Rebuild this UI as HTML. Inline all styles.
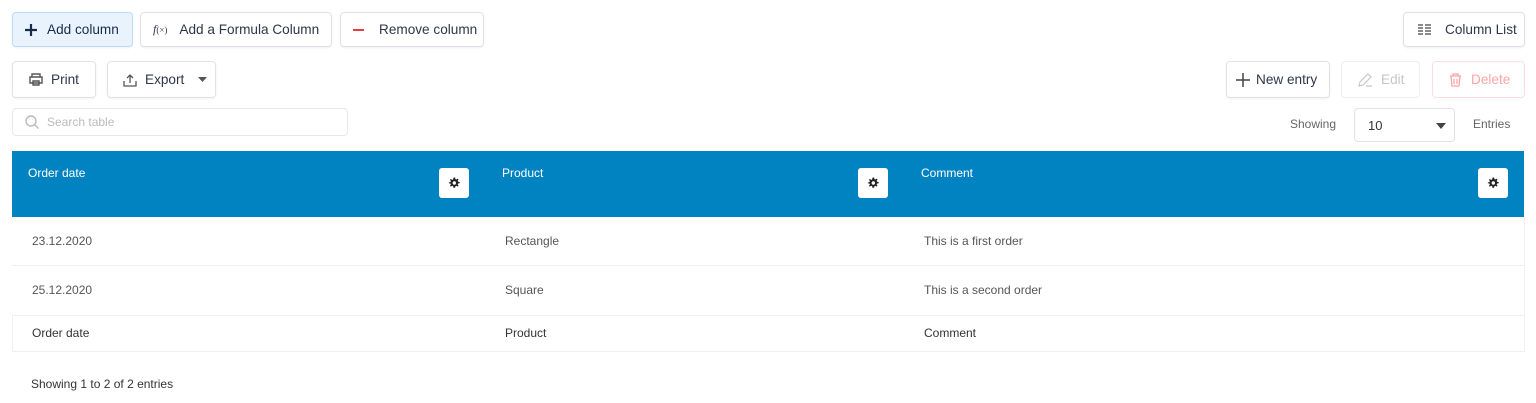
<!DOCTYPE html>
<html><head><style>
*{box-sizing:border-box;margin:0;padding:0}
body{width:1536px;height:403px;background:#fff;font-family:"Liberation Sans",sans-serif;position:relative;overflow:hidden;color:#333}
.b{position:absolute;border:1px solid #dfe2e8;border-radius:4px;background:#fff;display:flex;align-items:center;font-size:13.6px;color:#2d3748;box-shadow:0 1px 2px rgba(0,0,0,.06)}
.t{position:absolute;font-size:12px;color:#555;white-space:nowrap}
.h{position:absolute;font-size:12px;color:#fff}
.g{position:absolute;width:30px;height:30px;background:#fff;border-radius:3px;display:flex;align-items:center;justify-content:center}
.line{position:absolute;left:12px;width:1512px;height:1px;background:#eef0f4}
</style></head><body>
<svg width="0" height="0" style="position:absolute"><defs><g id="cog"><path d="M6 0.5l1.1 0 .3 1.6 1 .45 1.35-.9.8.8-.9 1.35.45 1 1.6.3v1.1l-1.6.3-.45 1 .9 1.35-.8.8-1.35-.9-1 .45-.3 1.6H5.45l-.3-1.6-1-.45-1.35.9-.8-.8.9-1.35-.45-1-1.6-.3V5.45l1.6-.3.45-1-.9-1.35.8-.8 1.35.9 1-.45.3-1.6z" fill="#222"/><circle cx="6.3" cy="6" r="1.7" fill="#fff"/></g></defs></svg>
<div class="b" style="left:12px;top:12px;width:121px;height:35px;background:#e8f3fe;border-color:#bcdcf7;color:#1a2b4a"><svg style="margin:0 10px 0 12px" width="12" height="12"><path d="M6 0v12M0 6h12" stroke="#1a2b4a" stroke-width="2.2"/></svg>Add column</div>
<div class="b" style="left:140px;top:12px;width:192px;height:35px"><span style="margin:0 12px 0 12px;font-style:italic;font-size:12px;font-family:'Liberation Serif',serif">f<span style="font-size:9px;font-style:normal">(×)</span></span>Add a Formula Column</div>
<div class="b" style="left:340px;top:12px;width:144px;height:35px"><span style="display:inline-block;width:11px;height:2px;background:#e53e3e;margin:0 15px 0 12px"></span>Remove column</div>
<div class="b" style="left:1403px;top:12px;width:122px;height:35px"><svg style="margin:0 14px 0 14px" width="13" height="11"><path d="M0 1h5M0 4h5M0 7h5M0 10h5M7 1h6M7 4h6M7 7h6M7 10h6" stroke="#444" stroke-width="1.2"/></svg>Column List</div>
<div class="b" style="left:12px;top:61px;width:84px;height:37px"><svg style="margin:0 8px 0 16px" width="14" height="13" fill="none" stroke="#555" stroke-width="1.4"><path d="M3 4V1h8v3M1 4h12v6H1zM4 8h6v4H4z"/></svg>Print</div>
<div class="b" style="left:107px;top:61px;width:109px;height:37px"><svg style="margin:0 8px 0 15px" width="14" height="14" fill="none" stroke="#555" stroke-width="1.3"><path d="M7 10V2M4 5l3-3 3 3M1 8v5h12V8"/></svg>Export<svg style="margin-left:14px" width="9" height="5"><path d="M0 0h9L4.5 5z" fill="#555"/></svg></div>
<div class="b" style="left:1226px;top:61px;width:104px;height:37px"><svg style="margin:0 6px 0 9px" width="14" height="14"><path d="M7 0v14M0 7h14" stroke="#444" stroke-width="1.5"/></svg>New entry</div>
<div class="b" style="left:1341px;top:61px;width:79px;height:37px;color:#c4c7cc;box-shadow:none;border-color:#eee"><svg style="margin:0 9px 0 16px" width="14" height="14" fill="none" stroke="#c4c7cc" stroke-width="1.2"><path d="M1 13l1-4 8-8 3 3-8 8zM8 13h6"/></svg>Edit</div>
<div class="b" style="left:1432px;top:61px;width:93px;height:37px;color:#fca5a5;border-color:#fdd;box-shadow:none"><svg style="margin:0 9px 0 16px" width="13" height="14" fill="none" stroke="#fca5a5" stroke-width="1.3"><path d="M1 3h11M4 3V1h5v2M2 3l1 10h7l1-10M5 6v5M8 6v5"/></svg>Delete</div>
<div class="b" style="left:12px;top:108px;width:336px;height:28px;box-shadow:none;border-color:#e6e8ec;color:#bbb;font-size:12px"><svg style="margin:0 8px 0 12px" width="14" height="14" fill="none" stroke="#bbb" stroke-width="1.4"><circle cx="6" cy="6" r="5"/><path d="M9.5 9.5l4 4"/></svg>Search table</div>
<div class="t" style="left:1290px;top:117px;color:#666">Showing</div>
<div class="b" style="left:1354px;top:108px;width:101px;height:34px;font-size:13px;box-shadow:none;color:#333"><span style="margin-left:13px">10</span><svg style="position:absolute;left:81px;top:14px" width="10" height="6"><path d="M0 0h10L5 6z" fill="#444"/></svg></div>
<div class="t" style="left:1473px;top:117px;color:#666">Entries</div>
<div style="position:absolute;left:12px;top:151px;width:1512px;height:66px;background:#0083c0"></div>
<div class="h" style="left:28px;top:166px">Order date</div>
<div class="h" style="left:502px;top:166px">Product</div>
<div class="h" style="left:921px;top:166px">Comment</div>
<div class="g" style="left:439px;top:168px"><svg width="13" height="12"><use href="#cog"/></svg></div>
<div class="g" style="left:858px;top:168px"><svg width="13" height="12"><use href="#cog"/></svg></div>
<div class="g" style="left:1478px;top:168px"><svg width="13" height="12"><use href="#cog"/></svg></div>
<div class="line" style="top:265px"></div>
<div class="line" style="top:315px"></div>
<div class="line" style="top:351px"></div>
<div style="position:absolute;left:12px;top:315px;width:1px;height:37px;background:#eef0f4"></div>
<div style="position:absolute;left:1524px;top:216px;width:1px;height:136px;background:#eef0f4"></div>
<div class="t" style="left:32px;top:234px">23.12.2020</div>
<div class="t" style="left:505px;top:234px">Rectangle</div>
<div class="t" style="left:924px;top:234px">This is a first order</div>
<div class="t" style="left:32px;top:283px">25.12.2020</div>
<div class="t" style="left:505px;top:283px">Square</div>
<div class="t" style="left:924px;top:283px">This is a second order</div>
<div class="t" style="left:32px;top:326px;color:#333">Order date</div>
<div class="t" style="left:505px;top:326px;color:#333">Product</div>
<div class="t" style="left:924px;top:326px;color:#333">Comment</div>
<div class="t" style="left:31px;top:377px;color:#333">Showing 1 to 2 of 2 entries</div>
</body></html>
